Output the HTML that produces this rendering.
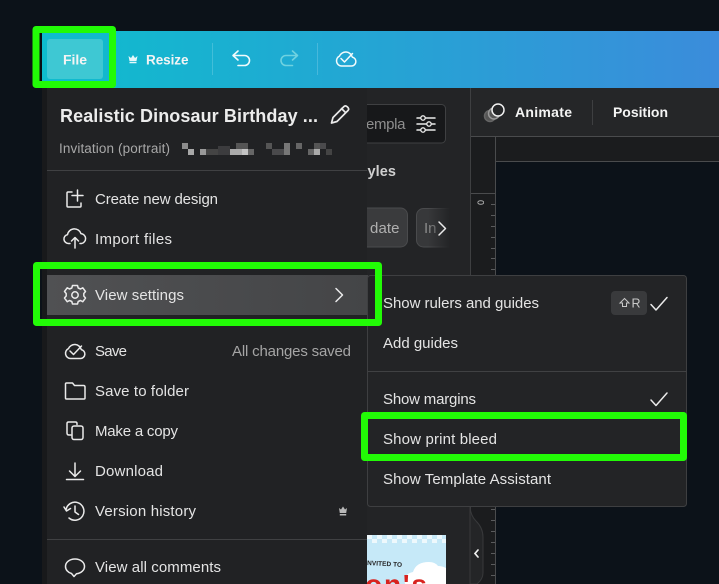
<!DOCTYPE html>
<html><head><meta charset="utf-8"><style>
html,body{margin:0;padding:0;background:#0b1118;width:719px;height:584px;overflow:hidden}
svg{display:block}
text{font-family:"Liberation Sans",sans-serif;font-size:15px;fill:#e4e4e4}
.b{font-weight:bold;fill:#f4f4f4}
.i{fill:none;stroke:#eaeaea;stroke-width:1.5;stroke-linecap:round;stroke-linejoin:round}
</style></head><body>
<svg width="719" height="584" viewBox="0 0 719 584" xmlns="http://www.w3.org/2000/svg">
<defs>
<linearGradient id="bar" x1="0" x2="1" y1="0" y2="0"><stop offset="0" stop-color="#0ebdcd"/><stop offset="1" stop-color="#3b8cdb"/></linearGradient>
<linearGradient id="hi" x1="0" x2="1" y1="0" y2="0"><stop offset="0" stop-color="#505153"/><stop offset="1" stop-color="#444547"/></linearGradient>
<linearGradient id="fade" x1="0" x2="1" y1="0" y2="0"><stop offset="0" stop-color="#232426" stop-opacity="0"/><stop offset="1" stop-color="#232426"/></linearGradient>
</defs>
<rect width="719" height="584" fill="#0c1219"/>
<!-- top bar -->
<rect x="40" y="31" width="679" height="57" fill="url(#bar)"/>
<rect x="40" y="33" width="2" height="48" fill="#0a0f14"/>
<rect x="47" y="39" width="56" height="40" rx="3" fill="#3ec8d3"/>
<text x="63" y="64.500" class="b" style="font-size:14px" textLength="24" lengthAdjust="spacing">File</text>
<path d="M128.500 56l2.500 2 2-3 2 3 2.500-2-1 5h-7z M129.500 61.800h7v1.500h-7z" fill="#e6f8fa"/>
<text x="146" y="64.500" class="b" style="font-size:13.500px" textLength="42.500" lengthAdjust="spacing">Resize</text>
<rect x="212" y="43" width="1" height="32" fill="#fff" opacity=".18"/>
<path class="i" d="M238 51l-5 4.500 5 4.500 M233.500 55.500h11a5 5 0 0 1 0 10h-6.500" style="stroke:#f2fbfc;stroke-width:1.600"/>
<path class="i" d="M292.500 51l5 4.500-5 4.500 M297 55.500h-11a5 5 0 0 0 0 10h6.500" style="stroke:#6fd2e0;stroke-width:1.600"/>
<rect x="317" y="43" width="1" height="32" fill="#fff" opacity=".18"/>
<g transform="translate(271,-292.500)"><path class="i" d="M70.500 358.500h10a4.500 4.500 0 0 0 .8-8.900 6.800 6.800 0 0 0-12.800-1 5.200 5.200 0 0 0 2 9.900z M70 351l3.500 3.500 8-8.500" style="stroke:#f2fbfc"/></g>

<!-- right side base panels -->
<rect x="360" y="88" width="359" height="48" fill="#252628"/>
<rect x="42" y="88" width="428" height="496" fill="#232426"/>
<rect x="470" y="88" width="1" height="496" fill="#3e3f41"/>
<rect x="471" y="136" width="248" height="1" fill="#4a4b4d"/>
<rect x="471" y="137" width="248" height="24" fill="#1b1c1e"/>
<rect x="471" y="161" width="24" height="423" fill="#1b1c1e"/>
<rect x="495" y="137" width="1" height="447" fill="#4a4b4d"/>
<rect x="495" y="161" width="224" height="1" fill="#4a4b4d"/>
<rect x="471" y="193" width="24" height="1" fill="#4a4b4d"/>
<g fill="#5a5b5d"><rect x="491" y="204" width="4" height="1"/><rect x="491" y="215" width="4" height="1"/><rect x="491" y="226" width="4" height="1"/><rect x="491" y="237" width="4" height="1"/><rect x="491" y="248" width="4" height="1"/><rect x="491" y="258" width="4" height="1"/><rect x="491" y="269" width="4" height="1"/>
<rect x="491" y="509" width="4" height="1"/><rect x="491" y="520" width="4" height="1"/><rect x="491" y="531" width="4" height="1"/><rect x="491" y="542" width="4" height="1"/><rect x="491" y="553" width="4" height="1"/><rect x="491" y="564" width="4" height="1"/><rect x="491" y="575" width="4" height="1"/></g>
<text transform="translate(484,205) rotate(-90)" style="font-size:9px;fill:#c8c8c8">0</text>
<path d="M470 505q0 10 6 16 7 7 7 16v36q0 6-6 11h-7z" fill="#242527" stroke="#38393b"/>

<!-- header right -->
<circle cx="490" cy="116" r="5.500" fill="#555" stroke="#666" stroke-width="1.500"/>
<circle cx="494" cy="113.500" r="5.500" fill="#555" stroke="#999" stroke-width="1.500"/>
<circle cx="498" cy="110" r="6" fill="#252628" stroke="#f0f0f0" stroke-width="1.500"/>
<text x="515" y="117" class="b" style="font-size:14px" textLength="57" lengthAdjust="spacing">Animate</text>
<rect x="592" y="100" width="1" height="25" fill="#3e3f41"/>
<text x="613" y="117" class="b" style="font-size:14px" textLength="55" lengthAdjust="spacing">Position</text>

<!-- left panel bits -->
<rect x="360" y="104.500" width="85.500" height="38.500" rx="4" fill="#17181a" stroke="#3f4042"/>
<text x="366" y="129" style="fill:#8e8e8e" textLength="39.500" lengthAdjust="spacing">empla</text>
<path class="i" d="M417 118h18 M417 124h18 M417 130h18"/>
<circle cx="423" cy="118" r="2.200" fill="#17181a" stroke="#eaeaea" stroke-width="1.300"/>
<circle cx="429" cy="124" r="2.200" fill="#17181a" stroke="#eaeaea" stroke-width="1.300"/>
<circle cx="423" cy="130" r="2.200" fill="#17181a" stroke="#eaeaea" stroke-width="1.300"/>
<text x="367.500" y="176" class="b" style="font-size:14.500px;fill:#d0d0d0" textLength="28.500" lengthAdjust="spacing">yles</text>
<rect x="350" y="208" width="57.500" height="39" rx="7" fill="#3a3b3d" stroke="#4a4b4d"/>
<text x="370" y="233" style="fill:#b0b0b0" textLength="29.500" lengthAdjust="spacing">date</text>
<rect x="416.500" y="208.500" width="44" height="38.500" rx="7" fill="#37383a" stroke="#4a4b4d"/>
<text x="424" y="233" style="fill:#8a8a8a">In</text>
<rect x="428" y="205" width="22" height="45" fill="url(#fade)"/>
<rect x="450" y="205" width="14" height="45" fill="#232426"/>
<path class="i" d="M439 222l6.500 6.500-6.500 6.500" stroke-width="1.700"/>

<!-- thumbnail -->
<rect x="367" y="535" width="79" height="49" fill="#c6e9f8"/>
<g fill="#eef8fc"><rect x="367" y="535" width="5" height="4"/><rect x="377" y="535" width="5" height="4"/><rect x="387" y="535" width="5" height="4"/><rect x="397" y="535" width="5" height="4"/><rect x="407" y="535" width="5" height="4"/><rect x="417" y="535" width="5" height="4"/><rect x="427" y="535" width="5" height="4"/><rect x="437" y="535" width="5" height="4"/>
<rect x="372" y="539" width="5" height="4"/><rect x="382" y="539" width="5" height="4"/><rect x="392" y="539" width="5" height="4"/><rect x="402" y="539" width="5" height="4"/><rect x="412" y="539" width="5" height="4"/><rect x="422" y="539" width="5" height="4"/><rect x="432" y="539" width="5" height="4"/><rect x="442" y="539" width="4" height="4"/></g>
<path d="M405 584q-2-10 8-12 3-10 16-10 6 0 9 4 4 0 8 2v16z" fill="#fff"/>
<text x="367" y="565" transform="rotate(3 367 565)" style="font-size:6.500px;font-weight:bold;fill:#222" textLength="35" lengthAdjust="spacing">NVITED TO</text>
<svg x="367" y="535" width="79" height="49"><text x="-2" y="59" style="font-size:28px;font-weight:bold;fill:#d8231f" textLength="62" lengthAdjust="spacing">on's</text></svg>
<path d="M478 550l-3 3.500 3 3.500" fill="none" stroke="#f0f0f0" stroke-width="1.700" stroke-linecap="round"/>

<!-- main menu -->
<rect x="42" y="88" width="5" height="496" fill="#18191b"/>
<rect x="47" y="88" width="320" height="496" fill="#212224"/>
<text x="60" y="122" class="b" style="font-size:18px;fill:#ececec" textLength="258" lengthAdjust="spacing">Realistic Dinosaur Birthday ...</text>
<path class="i" d="M331.500 123l1.500-5.500 11-11q1.500-1.500 3.500 0.500t0.500 3.500l-11 11z M341.500 108.500l4 4" style="stroke-width:1.700"/>
<text x="59" y="153" style="font-size:13.500px;fill:#a8a8a8" textLength="111" lengthAdjust="spacing">Invitation (portrait)</text>
<g>
<rect x="182" y="143" width="6" height="6" fill="#8c8c8c"/><rect x="188" y="149" width="6" height="6" fill="#a8a8a8"/>
<rect x="200" y="149" width="6" height="6" fill="#999"/><rect x="206" y="149" width="12" height="6" fill="#444"/><rect x="218" y="146" width="12" height="9" fill="#3c3c3e"/>
<rect x="230" y="149" width="12" height="6" fill="#aaa"/><rect x="242" y="149" width="6" height="6" fill="#c4c4c4"/><rect x="236" y="143" width="12" height="6" fill="#555"/><rect x="248" y="149" width="6" height="6" fill="#666"/>
<rect x="266" y="143" width="6" height="6" fill="#555"/><rect x="272" y="149" width="12" height="6" fill="#4a4a4c"/><rect x="284" y="143" width="6" height="12" fill="#777"/><rect x="296" y="143" width="6" height="6" fill="#666"/>
<rect x="308" y="149" width="6" height="6" fill="#666"/><rect x="314" y="149" width="6" height="6" fill="#aaa"/><rect x="320" y="143" width="6" height="6" fill="#4a4a4c"/><rect x="326" y="149" width="6" height="6" fill="#444"/><rect x="314" y="143" width="6" height="6" fill="#555"/>
</g>
<rect x="47" y="170" width="320" height="1" fill="#404143"/>

<path class="i" d="M72 192h-4q-1 0-1 1v13q0 1 1 1h12q1 0 1-1v-3 M77.500 190v11 M72 195.500h11"/>
<text x="95" y="204" textLength="123" lengthAdjust="spacing">Create new design</text>
<path class="i" d="M70 243.500h-1.500a4.500 4.500 0 0 1-1-8.900 7 7 0 0 1 13.500-1 5 5 0 0 1 .5 9.900h-1.500 M75 248v-10 M71.500 241l3.500-3.500 3.500 3.500"/>
<text x="95" y="244" textLength="77" lengthAdjust="spacing">Import files</text>

<rect x="47" y="275" width="321" height="40" fill="url(#hi)"/>
<circle cx="75" cy="295" r="3.200" class="i"/>
<path class="i" d="M72.500 285.500h5l.7 2.500 2.300 1 2.300-1.200 2.700 3.700-1.700 2 0 2.500 1.700 2-2.700 3.700-2.300-1.200-2.300 1-.7 2.500h-5l-.7-2.500-2.300-1-2.300 1.200-2.700-3.700 1.700-2 0-2.500-1.700-2 2.700-3.700 2.300 1.200 2.300-1z"/>
<text x="95" y="300" textLength="89" lengthAdjust="spacing">View settings</text>
<path class="i" d="M336 288.500l6.500 6.500-6.500 6.500" stroke-width="1.600"/>

<path class="i" d="M70.500 358.500h10a4.500 4.500 0 0 0 .8-8.900 6.800 6.800 0 0 0-12.800-1 5.200 5.200 0 0 0 2 9.900z M70 351l3.500 3.500 8-8.500"/>
<text x="95" y="356" textLength="32" lengthAdjust="spacing">Save</text>
<text x="232" y="356" style="fill:#a5a5a5" textLength="119" lengthAdjust="spacing">All changes saved</text>
<path class="i" d="M65.500 398v-14q0-1 1-1h6l2 2.500h9q1.500 0 1.500 1.500v11q0 1-1 1h-17.500q-1 0-1-1z"/>
<text x="95" y="396" textLength="94" lengthAdjust="spacing">Save to folder</text>
<path class="i" d="M71 435h-2q-2 0-2-2v-9.500q0-1.500 1.500-1.500h7q1.500 0 1.500 1.500v1"/>
<rect x="72" y="426" width="11" height="13.500" rx="2" class="i"/>
<text x="95" y="436" textLength="83" lengthAdjust="spacing">Make a copy</text>
<path class="i" d="M75 463v13 M69.500 471l5.500 5.500 5.500-5.500 M66.500 479.500h17"/>
<text x="95" y="476" textLength="68" lengthAdjust="spacing">Download</text>
<path class="i" d="M66 510a9 9 0 1 1 3 8 M64 507l2.500 4 4-2.500 M75 506v6l3.500 2.500"/>
<text x="95" y="516" textLength="101" lengthAdjust="spacing">Version history</text>
<path d="M339 508l2 1.500 2-3 2 3 2-1.500-.8 5h-6.400z M339.800 514h6.400v1.500h-6.400z" fill="#b8b8b8"/>
<rect x="47" y="539" width="320" height="1" fill="#404143"/>
<path class="i" d="M75 559c-5.500 0-9.500 3.300-9.500 7.500 0 3.300 2.500 6 6 7l2.500 3 2.500-2.700c4.500-.5 8-3.600 8-7.300 0-4.200-4-7.500-9.500-7.500z" stroke-width="1.400"/>
<text x="95" y="572" textLength="126" lengthAdjust="spacing">View all comments</text>

<!-- submenu -->
<rect x="367.500" y="275.500" width="319" height="231" rx="3" fill="#232426" stroke="#3e3f41"/>
<rect x="368" y="371" width="319" height="1" fill="#404143"/>
<text x="383" y="308" textLength="156" lengthAdjust="spacing">Show rulers and guides</text>
<rect x="611" y="291" width="36" height="24" rx="4" fill="#393a3c"/>
<path d="M624.500 298.500l-4.500 4.500h2.500v3.500h4v-3.500h2.500z" fill="none" stroke="#c8c8c8" stroke-width="1"/>
<text x="631.500" y="307.500" style="font-size:12.500px;fill:#c8c8c8">R</text>
<path class="i" d="M651 304.500l5 5.500 11-12.500" stroke-width="1.700"/>
<text x="383" y="348" textLength="75" lengthAdjust="spacing">Add guides</text>
<text x="383" y="404" textLength="93" lengthAdjust="spacing">Show margins</text>
<path class="i" d="M651 400l5 5.500 11-12.500" stroke-width="1.700"/>
<text x="383" y="444" textLength="114" lengthAdjust="spacing">Show print bleed</text>
<text x="383" y="484" textLength="168" lengthAdjust="spacing">Show Template Assistant</text>

<!-- green highlight boxes -->
<g fill="none" stroke="#22fb06" stroke-width="7" stroke-linejoin="round">
<rect x="36" y="29.500" width="76.500" height="55"/>
<rect x="36.500" y="265.500" width="342" height="57"/>
<rect x="364.500" y="415.500" width="319" height="42"/>
</g>
</svg>
</body></html>
